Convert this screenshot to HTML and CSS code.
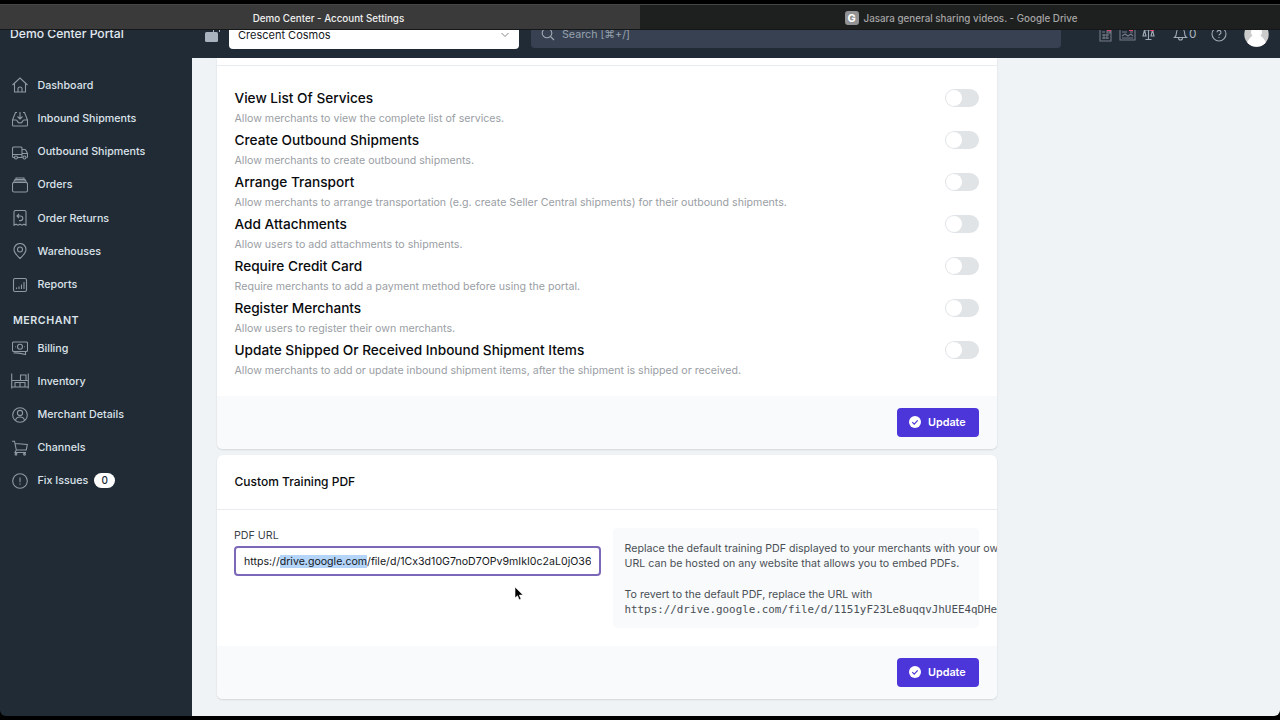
FILE: index.html
```html
<!DOCTYPE html>
<html lang="en">
<head>
    <meta charset="utf-8">
    <title>Demo Center - Account Settings</title>
    <link rel="stylesheet" href="styles.css">
</head>
<body>
    <div class="tabs">
        <div class="tab active">Demo Center - Account Settings</div>
        <div class="tab"><span class="favicon">G</span>Jasara general sharing videos. - Google Drive</div>
    </div>

    <header class="topbar">
        <div class="brand">Demo Center Portal</div>
        <svg class="store-icon" viewBox="0 0 18 18"><rect x="2" y="8" width="13" height="10" rx="1.5" fill="#a9b3bf"/><path d="M10.500 8V3M16.500 5v3" stroke="#a9b3bf" fill="none"/></svg>
        <div class="merchant-select">
            <span>Crescent Cosmos</span>
            <svg width="8" height="6" viewBox="0 0 8 6"><path d="M.5 1L4 4.500 7.500 1" fill="none" stroke="#888"/></svg>
        </div>
        <div class="search">
            <svg width="14" height="14" viewBox="0 0 14 14"><circle cx="6" cy="6" r="4.800"/><path d="M9.500 9.500l3.500 3.500"/></svg>
            <span>Search [⌘+/]</span>
        </div>
        <div class="tools">
            <svg class="tool doc" width="13" height="16" viewBox="0 0 13 16"><path d="M1 3h11v12H1zM3 6h3M3 9h7M3 12h7M5 8v5M8 8v5M8 5h3v2H8z"/><path class="dot" d="M8 4h4"/></svg>
            <svg class="tool card-tool" width="17" height="16" viewBox="0 0 17 16"><path d="M1 3h15v11H1zM3 6h5M11 6h3M3 12h11M3 10l3-2 3 2 3-2 2 2"/><path class="dot" d="M10 4h4"/></svg>
            <svg class="tool scale" width="13" height="16" viewBox="0 0 13 16"><path d="M6.500 1v12M3.500 13.500h6M2 4h9M2.500 4L1 10h3zM10.500 4L9 10h3z"/><path class="dot" d="M8 4h4"/></svg>
            <svg class="tool bell" width="15" height="16" viewBox="0 0 15 16"><path d="M1.500 11.500c2-1.500 2-3 2-5a4 4 0 0 1 8 0c0 2 0 3.500 2 5zM5.500 12a2 2 0 0 0 4 0"/></svg>
            <span class="count">0</span>
            <svg class="tool help" width="16" height="16" viewBox="0 0 16 16"><circle cx="8" cy="8" r="7"/><path d="M6 6.300a2 2 0 1 1 2.800 1.900c-.600.300-.8.600-.8 1.300M8 11v1"/></svg>
            <svg class="avatar" width="25" height="25" viewBox="0 0 25 25"><defs><clipPath id="round"><circle cx="12.500" cy="12.500" r="12.200"/></clipPath></defs><g clip-path="url(#round)"><path fill="#ccc" d="M0 0h25v25H0z"/><circle cx="12.500" cy="10" r="5.500" fill="#fff"/><path fill="#fff" d="M8 14h9q5 4 6 11H2q1-7 6-11z"/></g></svg>
        </div>
    </header>

    <div class="layout">
        <nav class="sidebar">
            <a class="item"><svg viewBox="0 0 16 16"><path d="M.5 8L8 1l7.500 7M2.500 6.500v8.500h11V6.500M6 15v-3.500q0-1.500 2-1.500t2 1.500V15"/></svg>Dashboard</a>
            <a class="item"><svg viewBox="0 0 16 16"><path d="M5 1.500H3.500L.5 9v5q0 1 1 1h13q1 0 1-1V9l-3-7.500H11M.5 9H4q1 0 1.500 1.500Q6 12 8 12t2.500-1.500Q11 9 12 9h3.500M8 1v7M5.500 5.500L8 8l2.500-2.500"/></svg>Inbound Shipments</a>
            <a class="item"><svg viewBox="0 0 16 16"><path d="M2.500 13.500h-1q-1 0-1-1v-8q0-1.500 1.500-1.500H9q1 0 1 1v9.500H5.500M10 5.500h2.500q1 0 1.500 1l1.500 3v3.500q0 .5-1 .5M.5 10.500H10M10 9.500h5.500"/><circle cx="4" cy="13.500" r="1.500"/><circle cx="12.500" cy="13.500" r="1.500"/></svg>Outbound Shipments</a>
            <a class="item"><svg viewBox="0 0 16 16"><rect x=".5" y="5.500" width="15" height="9.500" rx="1.500"/><path d="M1.500 5.500l1.500-3h10l1.500 3M4 2.500V1h8v1.500M3 4h10"/></svg>Orders</a>
            <a class="item"><svg viewBox="0 0 16 16"><path d="M2 15.200V2q0-1.500 1.500-1.500h9Q14 .5 14 2v13.200l-2-1-2 1-2-1-2 1-2-1zM7 4L5 6l2 2M5 6h3.500a2.300 2.300 0 0 1 0 4.600H7"/></svg>Order Returns</a>
            <a class="item"><svg viewBox="0 0 16 16"><path d="M8 15.500Q2 9.800 2 6.500a6 6 0 0 1 12 0Q14 9.800 8 15.500z"/><circle cx="8" cy="6.500" r="2.500"/></svg>Warehouses</a>
            <a class="item"><svg viewBox="0 0 16 16"><rect x="1.500" y="1.500" width="13" height="13" rx="1.500"/><path d="M4.500 12v-1.500M7 12V9.500M9.500 12V7.500M12 12V5"/></svg>Reports</a>
            <h6 class="section">MERCHANT</h6>
            <a class="item"><svg viewBox="0 0 16 16"><rect x=".5" y="2" width="15" height="9.500" rx="1"/><circle cx="8" cy="6.700" r="2.500"/><path d="M3 6.700h.7M12.300 6.700h.7M1.500 13q5-.5 12 1.500v-3"/></svg>Billing</a>
            <a class="item"><svg class="wide" viewBox="0 0 18 16"><path d="M.7.500v15M17.300.500v15M.7 7.500h16.600M.7 14h16.600M9.500 7.500V2h5.500v5.500M4 14V9.500h5V14M9 9.500h5V14"/></svg>Inventory</a>
            <a class="item"><svg viewBox="0 0 16 16"><circle cx="8" cy="8" r="7.300"/><circle cx="8" cy="6" r="2.600"/><path d="M3.500 13.500q.5-3.500 4.500-3.500t4.500 3.500"/></svg>Merchant Details</a>
            <a class="item"><svg viewBox="0 0 16 16"><path d="M0 1.200h2.500L4.300 10M3 3.500l12.300 1-1 5.500H4.300L3 12.500h11"/><circle cx="4" cy="14.300" r=".9"/><circle cx="12.500" cy="14.300" r=".9"/></svg>Channels</a>
            <a class="item"><svg viewBox="0 0 16 16"><circle cx="8" cy="8" r="7.300"/><path d="M8 4.500v4.800M8 10.600v1.200"/></svg>Fix Issues<span class="badge">0</span></a>
        </nav>

        <main class="content">
            <section class="card permissions">
                <div class="card-header"></div>
                <div class="card-body">
                    <div class="setting"><div><h3>View List Of Services</h3><p>Allow merchants to view the complete list of services.</p></div><span class="toggle"></span></div>
                    <div class="setting"><div><h3>Create Outbound Shipments</h3><p>Allow merchants to create outbound shipments.</p></div><span class="toggle"></span></div>
                    <div class="setting"><div><h3>Arrange Transport</h3><p>Allow merchants to arrange transportation (e.g. create Seller Central shipments) for their outbound shipments.</p></div><span class="toggle"></span></div>
                    <div class="setting"><div><h3>Add Attachments</h3><p>Allow users to add attachments to shipments.</p></div><span class="toggle"></span></div>
                    <div class="setting"><div><h3>Require Credit Card</h3><p>Require merchants to add a payment method before using the portal.</p></div><span class="toggle"></span></div>
                    <div class="setting"><div><h3>Register Merchants</h3><p>Allow users to register their own merchants.</p></div><span class="toggle"></span></div>
                    <div class="setting"><div><h3>Update Shipped Or Received Inbound Shipment Items</h3><p>Allow merchants to add or update inbound shipment items, after the shipment is shipped or received.</p></div><span class="toggle"></span></div>
                </div>
                <div class="card-footer">
                    <button class="btn"><svg width="12" height="12" viewBox="0 0 12 12"><circle cx="6" cy="6" r="6" fill="#fff"/><path d="M3.300 6.200l1.900 1.900 3.500-3.700" fill="none" stroke="#4c35d9" stroke-width="1.200"/></svg>Update</button>
                </div>
            </section>

            <section class="card training">
                <div class="card-header">Custom Training PDF</div>
                <div class="card-body">
                    <div class="field">
                        <label>PDF URL</label>
                        <div class="url-input"><div class="url-text">https://<mark>drive.google.com</mark>/file/d/1Cx3d10G7noD7OPv9mIkI0c2aL0jO36</div></div>
                    </div>
                    <div class="hint">
                        Replace the default training PDF displayed to your merchants with your own.<br>
                        URL can be hosted on any website that allows you to embed PDFs.<br><br>
                        To revert to the default PDF, replace the URL with<br>
                        <code>https://drive.google.com/file/d/1151yF23Le8uqqvJhUEE4qDHe</code>
                    </div>
                </div>
                <div class="card-footer">
                    <button class="btn"><svg width="12" height="12" viewBox="0 0 12 12"><circle cx="6" cy="6" r="6" fill="#fff"/><path d="M3.300 6.200l1.900 1.900 3.500-3.700" fill="none" stroke="#4c35d9" stroke-width="1.200"/></svg>Update</button>
                </div>
            </section>
        </main>
    </div>

    <svg class="pointer" width="10" height="15" viewBox="0 0 10 15"><path d="M1 1v11l2.500-2.300 1.700 4 1.800-.8-1.700-3.800H9z" fill="#000" stroke="#fff" stroke-width=".6"/></svg>
</body>
</html>
```
FILE: styles.css
```css
* {
    box-sizing: border-box;
}

body {
    margin: 0;
    height: 720px;
    padding: 4px 0;
    display: flex;
    flex-direction: column;
    overflow: hidden;
    background: #000;
    font-family: Inter, sans-serif;
    font-size: 10.7px;
}

h3, h6, p {
    margin: 0;
}

/* browser tabs */
.tabs {
    position: relative;
    z-index: 2;
    flex: none;
    display: flex;
    height: 26px;
    background: #1e1f1f;
    border-top: 1px solid #454545;
    border-bottom: 1px solid #151719;
}

.tab {
    width: 50%;
    display: flex;
    align-items: center;
    justify-content: center;
    gap: 5px;
    padding: 2px 0 0 2px;
    color: #a5a5a5;
    font-size: 9.8px;
    font-weight: 500;
}

.tab.active {
    padding-left: 17px;
    background: #3a3a3a;
    color: #f0f0f0;
}

.favicon {
    width: 14px;
    height: 14px;
    border-radius: 3px;
    background: #929295;
    color: #fff;
    font-size: 11px;
    font-weight: 700;
    line-height: 14px;
    text-align: center;
}

/* top bar, partly scrolled under the tabs */
.topbar {
    flex: none;
    display: flex;
    align-items: center;
    height: 48px;
    margin-top: -20px;
    background: #212b36;
}

.brand {
    width: 203px;
    padding: 0 0 1px 10px;
    color: #e3e9ef;
    font-size: 12.15px;
    font-weight: 500;
}

.store-icon {
    width: 18px;
    height: 18px;
    margin-right: 8px;
    margin-bottom: 3px;
}

.merchant-select {
    display: flex;
    align-items: center;
    justify-content: space-between;
    width: 290px;
    height: 30px;
    padding: 2px 10px 0 9px;
    border-radius: 4px;
    background: #fff;
    color: #15181c;
    font-size: 11px;
}

.search {
    display: flex;
    align-items: center;
    gap: 7px;
    width: 530px;
    height: 28px;
    margin-left: 12px;
    padding-left: 10px;
    border-radius: 4px;
    background: #374151;
    color: #98a2ae;
    font-size: 10.7px;
}

.search svg,
.tool {
    fill: none;
    stroke: #a0aab5;
    stroke-width: 1.1;
}

.tools {
    display: flex;
    align-items: center;
    flex: 1;
    padding-left: 38px;
}

.tool.doc, .tool.card-tool {
    stroke: #747d87;
}

.tool.card-tool {
    margin-left: 6.500px;
}

.tool.scale {
    margin-left: 6.500px;
}

.tool.bell {
    margin-left: 18px;
}

.tool.help {
    margin-left: 15px;
}

.tool .dot {
    stroke: #e0466f;
    stroke-width: 2;
}

.count {
    margin-left: 1px;
    color: #aeb7c1;
    font-size: 11.8px;
}

.avatar {
    margin-left: 17px;
}

.layout {
    display: flex;
    flex: 1;
    min-height: 0;
    border-radius: 0 0 6px 6px;
    overflow: hidden;
}

/* sidebar */
.sidebar {
    flex: none;
    width: 192px;
    padding-top: 10.800px;
    background: #212b36;
    color: #dce3ea;
}

.item {
    display: flex;
    align-items: center;
    height: 33.2px;
    padding-left: 12px;
    font-weight: 500;
}

.item svg {
    width: 16px;
    height: 16px;
    margin-right: 9.500px;
    fill: none;
    stroke: #8f99a4;
    stroke-width: 1.1;
}

.item svg.wide {
    width: 18px;
    margin-left: -1px;
    margin-right: 8.500px;
}

.section {
    height: 30.500px;
    padding: 11px 0 0 13px;
    font-size: 10.7px;
    font-weight: 600;
    line-height: 17px;
    letter-spacing: 0.5px;
}

.badge {
    width: 21px;
    height: 15px;
    margin-left: 6px;
    border-radius: 8px;
    background: #fff;
    color: #212b36;
    font-size: 10px;
    line-height: 15px;
    text-align: center;
}

/* cards */
.content {
    flex: 1;
    padding: 0 0 0 25px;
    background: #f0f3f5;
}

.card {
    width: 780px;
    overflow: hidden;
    background: #fff;
    border-radius: 6px;
    box-shadow: 0 1px 2px rgba(0, 0, 0, 0.12);
}

.permissions {
    border-radius: 0 0 6px 6px;
}

.card-header {
    border-bottom: 1px solid #e9ecee;
}

.permissions .card-header {
    height: 8px;
}

.permissions .card-body {
    height: 330px;
    padding: 22px 18px 0 17.500px;
}

.setting {
    display: flex;
    justify-content: space-between;
    height: 42px;
}

.setting h3 {
    color: #090b0e;
    font-size: 13.65px;
    font-weight: 500;
    line-height: 20px;
}

.setting p {
    color: #9a9ea4;
    font-size: 10.63px;
    line-height: 21px;
}

.toggle {
    width: 34px;
    height: 18px;
    margin-top: 1.400px;
    padding: 1px;
    border-radius: 9px;
    background: #e1e4e7;
}

.toggle::before {
    content: "";
    display: block;
    width: 16px;
    height: 16px;
    border-radius: 50%;
    background: #fff;
}

.card-footer {
    display: flex;
    align-items: center;
    justify-content: flex-end;
    height: 53px;
    padding-right: 18px;
    background: #f8fafb;
}

.btn {
    display: flex;
    align-items: center;
    gap: 7px;
    width: 82px;
    height: 29px;
    padding: 0 0 1px 12px;
    border: 0;
    border-radius: 4px;
    background: #4c35d9;
    color: #fff;
    font-family: inherit;
    font-size: 10.8px;
    font-weight: 600;
}

.training {
    margin-top: 6px;
}

.training .card-header {
    height: 55px;
    padding-left: 17.500px;
    color: #090b0e;
    font-size: 12px;
    font-weight: 500;
    line-height: 54px;
}

.training .card-body {
    display: grid;
    grid-template-columns: 367px 366px;
    gap: 12px;
    height: 136px;
    padding: 18px 0 0 17px;
}

.field label {
    display: block;
    color: #3c4148;
    line-height: 15px;
}

.url-input {
    height: 30px;
    margin-top: 3px;
    padding: 0 8px;
    border: 2px solid #7c68b8;
    border-radius: 4px;
    color: #15181c;
    font-size: 10.6px;
    line-height: 27px;
}

.url-text {
    overflow: hidden;
    white-space: nowrap;
}

.url-text mark {
    background: #b4d5f9;
    color: inherit;
}

.hint {
    height: 100px;
    padding: 13px 0 0 11.500px;
    border-radius: 4px;
    background: #f8fafb;
    color: #4a4f56;
    font-size: 10.63px;
    line-height: 15.200px;
    white-space: nowrap;
}

.hint code {
    font-family: "DejaVu Sans Mono", monospace;
    font-size: 10.87px;
}

.pointer {
    position: absolute;
    left: 514px;
    top: 586px;
}
```
